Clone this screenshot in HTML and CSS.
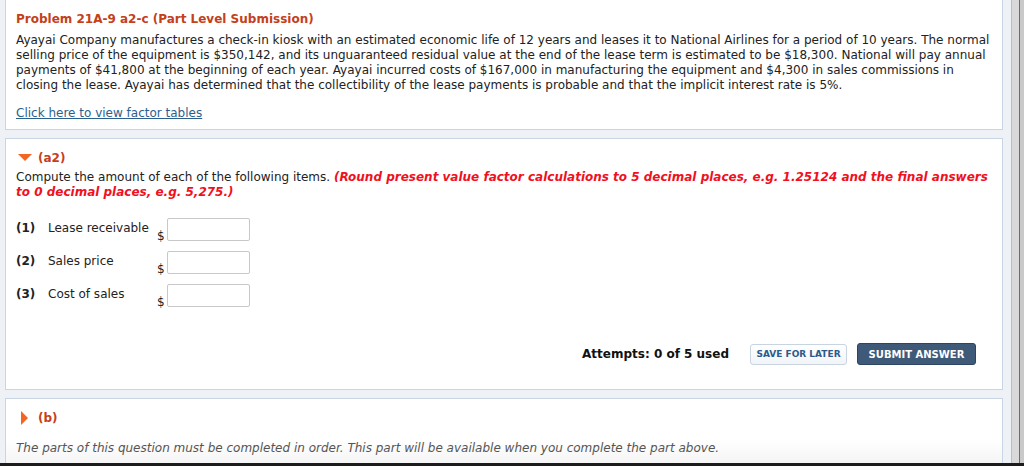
FILE: index.html
```html
<!DOCTYPE html>
<html>
<head>
<meta charset="utf-8">
<link rel="stylesheet" href="styles.css">
</head>
<body>
<div class="frame">
  <main class="main">
    <section class="panel panel-problem">
      <h1 class="title">Problem 21A-9 a2-c (Part Level Submission)</h1>
      <p class="body-text">Ayayai Company manufactures a check-in kiosk with an estimated economic life of 12 years and leases it to National Airlines for a period of 10 years. The normal selling price of the equipment is $350,142, and its unguaranteed residual value at the end of the lease term is estimated to be $18,300. National will pay annual payments of $41,800 at the beginning of each year. Ayayai incurred costs of $167,000 in manufacturing the equipment and $4,300 in sales commissions in closing the lease. Ayayai has determined that the collectibility of the lease payments is probable and that the implicit interest rate is 5%.</p>
      <a class="factor-link" href="#">Click here to view factor tables</a>
    </section>

    <section class="panel panel-part">
      <div class="part-head">
        <span class="tri-down"></span>
        <span class="part-name">(a2)</span>
      </div>
      <p class="body-text instr">Compute the amount of each of the following items. <em class="hint">(Round present value factor calculations to 5 decimal places, e.g. 1.25124 and the final answers to 0 decimal places, e.g. 5,275.)</em></p>
      <div class="rows">
        <div class="row">
          <span class="num">(1)</span>
          <span class="label">Lease receivable</span>
          <span class="dollar">$</span>
          <span class="input"></span>
        </div>
        <div class="row">
          <span class="num">(2)</span>
          <span class="label">Sales price</span>
          <span class="dollar">$</span>
          <span class="input"></span>
        </div>
        <div class="row">
          <span class="num">(3)</span>
          <span class="label">Cost of sales</span>
          <span class="dollar">$</span>
          <span class="input"></span>
        </div>
      </div>
      <div class="actions">
        <span class="attempts">Attempts: 0 of 5 used</span>
        <button class="btn btn-save">SAVE FOR LATER</button>
        <button class="btn btn-submit">SUBMIT ANSWER</button>
      </div>
    </section>

    <section class="panel panel-next">
      <div class="part-head">
        <span class="tri-right"></span>
        <span class="part-name">(b)</span>
      </div>
      <p class="locked">The parts of this question must be completed in order. This part will be available when you complete the part above.</p>
    </section>
  </main>
  <div class="scrollbar"><div class="sb-track"></div><div class="sb-edge"></div></div>
</div>
<div class="bottom-edge"></div>
</body>
</html>
```

FILE: styles.css
```css
* { box-sizing: border-box; }
html, body { margin: 0; padding: 0; }
body {
  background: #eef2f7;
  font-family: "DejaVu Sans", Verdana, sans-serif;
  font-size: 12px;
  color: #222;
  height: 466px;
  overflow: hidden;
}
.frame {
  display: flex;
  height: 466px;
}
.main {
  width: 1008px;
  padding: 0 5px 0 5px;
  display: flex;
  flex-direction: column;
  gap: 8px;
}
.panel {
  background: #fff;
  border: 1px solid #c9d5e3;
  padding: 0 10px;
}
.panel-problem {
  border-top: none;
  height: 130px;
  padding-top: 11px;
}
.title {
  margin: 0;
  font-size: 12px;
  line-height: 17px;
  font-weight: bold;
  color: #c4401b;
}
.body-text {
  margin: 5px 0 0 0;
  line-height: 15px;
  color: #222;
}
.factor-link {
  display: inline-block;
  margin-top: 13px;
  color: #2b5f8e;
  line-height: 15px;
  text-decoration: underline;
}
.panel-part {
  height: 252px;
  padding-top: 11px;
}
.part-head {
  display: flex;
  align-items: center;
  height: 15px;
}
.tri-down {
  width: 0; height: 0;
  margin-left: 2px;
  border-left: 7px solid transparent;
  border-right: 7px solid transparent;
  border-top: 7px solid #f26522;
  margin-right: 6px;
}
.tri-right {
  width: 0; height: 0;
  margin-left: 5px;
  border-top: 7px solid transparent;
  border-bottom: 7px solid transparent;
  border-left: 7px solid #f26522;
  margin-right: 10px;
}
.part-name {
  font-weight: bold;
  color: #c4401b;
}
.instr { margin-top: 5px; }
.hint {
  font-weight: bold;
  font-style: italic;
  color: #f0101e;
}
.rows {
  margin-top: 18px;
  display: flex;
  flex-direction: column;
  gap: 10px;
}
.row {
  display: flex;
  align-items: flex-start;
  height: 23px;
}
.num {
  width: 32px;
  font-weight: bold;
  padding-top: 3px;
}
.label {
  width: 109px;
  padding-top: 3px;
  white-space: nowrap;
}
.dollar {
  padding-top: 11px;
  width: 10px;
  font-size: 12px;
}
.input {
  width: 83px;
  height: 23px;
  border: 1px solid #c8c8c8;
  border-radius: 2px;
  background: #fff;
}
.actions {
  margin-top: 36px;
  display: flex;
  justify-content: flex-end;
  align-items: center;
  padding-right: 16px;
}
.attempts {
  font-weight: bold;
  color: #111;
  margin-right: 21px;
}
.btn {
  font-family: "DejaVu Sans", Verdana, sans-serif;
  font-weight: bold;
  font-size: 9px;
  height: 21px;
  border-radius: 3px;
  padding: 0;
  cursor: pointer;
}
.btn-save {
  width: 97px;
  background: linear-gradient(#ffffff, #f1f4f8);
  border: 1px solid #c8d4e2;
  color: #2c5a8c;
  margin-right: 10px;
}
.btn-submit {
  width: 119px;
  height: 22px;
  background: #3e5a78;
  border: 1px solid #2d4560;
  color: #fff;
  font-size: 10px;
}
.panel-next {
  flex: 1;
  padding-top: 11px;
  background: linear-gradient(#ffffff 0, #ffffff 40px, #f4f4f4 100%);
}
.locked {
  margin: 16px 0 0 0;
  font-style: italic;
  color: #555;
  line-height: 15px;
}
.scrollbar {
  width: 16px;
  display: flex;
  background: #eef2f7;
}
.sb-track {
  margin-left: 3px;
  width: 8px;
  background: #d9d9d9;
  border-left: 1px solid #bdbdbd;
}
.sb-edge {
  width: 5px;
  background: #c9c9c9;
  border-left: 1px solid #6d6d6d;
}
.bottom-edge {
  position: fixed;
  left: 0;
  right: 0;
  bottom: 0;
  height: 3px;
  background: #1c1c1c;
}
```
